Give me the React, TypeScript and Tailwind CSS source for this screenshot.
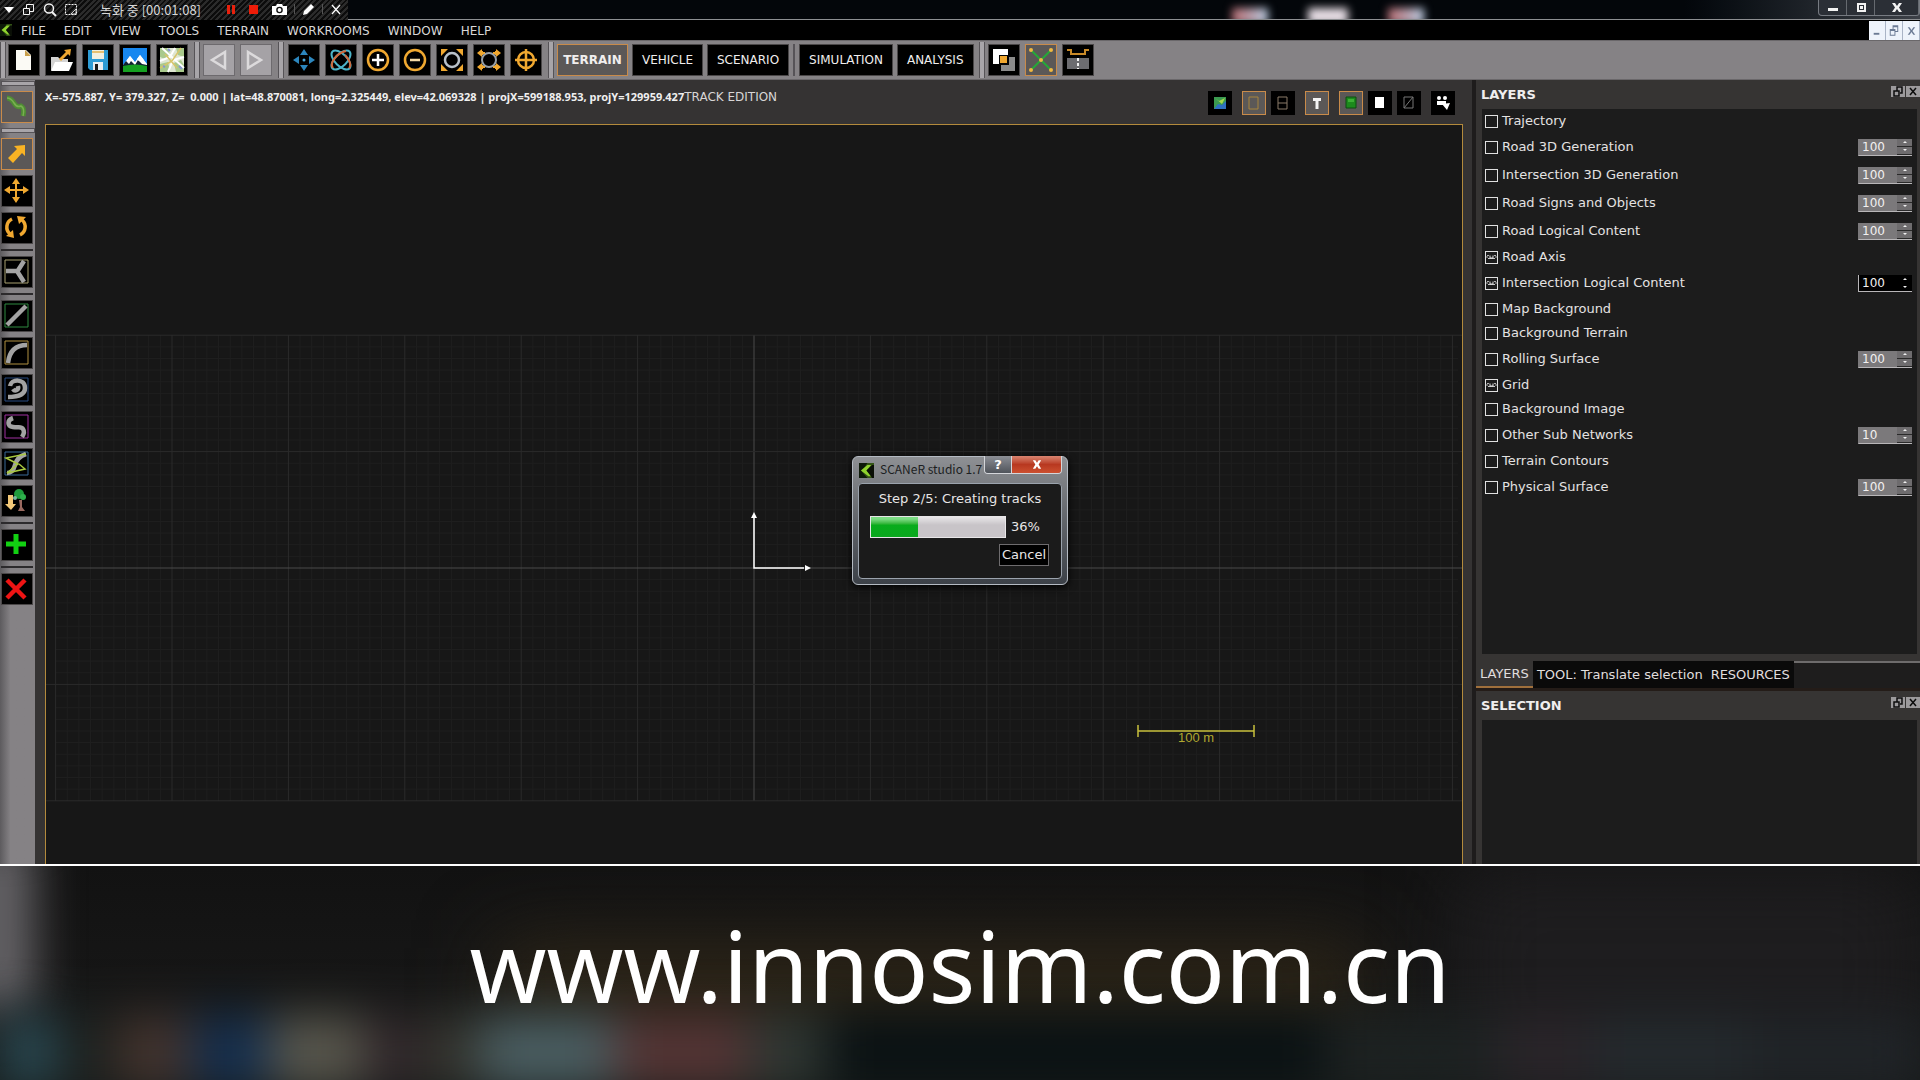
import React, { useState } from "react";

type Tone = "dark" | "active" | "disabled";

const TONES: Record<Tone, string> = {
  dark: "bg-black border-[#4a4748]",
  active: "bg-[#5b5857] border-[#c98b4a]",
  disabled: "bg-[#a5a2a6] border-[#6d6a6e]",
};

function Tool({ label, tone = "dark", children }: { label: string; tone?: Tone; children: React.ReactNode }) {
  return (
    <button
      type="button"
      aria-label={label}
      disabled={tone === "disabled"}
      className={`flex size-8 shrink-0 items-center justify-center border ${TONES[tone]}`}
    >
      <svg viewBox="0 0 32 32" className="size-8 shrink-0" fill="none">
        {children}
      </svg>
    </button>
  );
}

function SmallTool({ label, active, children }: { label: string; active?: boolean; children: React.ReactNode }) {
  return (
    <button
      type="button"
      aria-label={label}
      className={`flex size-6 shrink-0 items-center justify-center border ${active ? TONES.active : "border-black bg-black"}`}
    >
      <svg viewBox="0 0 24 24" className="size-6 shrink-0" fill="none">
        {children}
      </svg>
    </button>
  );
}

function Workroom({ label, active }: { label: string; active?: boolean }) {
  return (
    <button
      type="button"
      className={`h-8 shrink-0 border text-[12px] whitespace-nowrap text-[#f0eeee] ${
        active ? "w-[71px] border-[#c98b4a] bg-[#5b5857] font-bold" : "border-[#4a4748] bg-black px-[9px]"
      }`}
    >
      {label}
    </button>
  );
}

const Handle = () => <span className="h-9 w-[6px] shrink-0 border-x border-[#565357] bg-[#a8a5a9]" />;
const SideHandle = () => <span className="h-[5px] w-full shrink-0 border border-[#565357] bg-[#a8a5a9]" />;
const SideRule = () => <span className="h-[2px] w-8 shrink-0 bg-[#2c2a2c]" />;

const MENUS = ["FILE", "EDIT", "VIEW", "TOOLS", "TERRAIN", "WORKROOMS", "WINDOW", "HELP"];

function Logo({ className }: { className: string }) {
  return (
    <svg viewBox="0 0 16 16" className={className}>
      <rect width="16" height="16" fill="#0d1a08" />
      <path d="M0 0h16v16H9L3 9l6-9z" fill="#4c7a20" opacity=".6" />
      <path d="M2 8 9 2h4L8 8l6 6h-4z" fill="#8fd32e" />
      <path d="M8 8l6-6h2v14h-2z" fill="#0a0f06" />
    </svg>
  );
}

function RecorderBar() {
  return (
    <div className="flex h-5 w-[348px] shrink-0 items-center bg-[repeating-linear-gradient(135deg,#0c0c0c_0px,#0c0c0c_2px,#2b2b2b_2px,#2b2b2b_4px)] pl-1 text-white">
      <svg viewBox="0 0 80 20" className="h-5 w-20 shrink-0" fill="none" stroke="#f4f4f4">
        <path d="M0 7h10l-5 6z" fill="#fff" stroke="none" />
        <path d="M19.500 8.500h6v6h-6zM22.500 8.500v-4h7v7h-4" />
        <circle cx="45" cy="8.500" r="4.500" strokeWidth="1.500" />
        <path d="m48 12 4 4" strokeWidth="2" />
        <path d="M61.500 4.500h11v10h-11z" strokeDasharray="2 1" />
        <path d="m67 14 5-5v5z" strokeWidth=".8" />
      </svg>
      <span className="ml-4 w-[102px] shrink-0 font-['Noto_Sans_CJK_KR'] text-[13px] leading-5 whitespace-nowrap text-[#d8d8d8]">
        녹화 중 [00:01:08]
      </span>
      <svg viewBox="0 0 146 20" className="h-5 w-[146px] shrink-0" fill="none">
        <path d="M25 5h3v9h-3zM30 5h3v9h-3z" fill="#e8200c" />
        <rect x="47" y="5" width="9" height="9" fill="#ee1c08" />
        <path d="M70 6h4l1-2h5l1 2h4v9H70z" fill="#fff" />
        <circle cx="77.500" cy="10" r="2.600" stroke="#111" strokeWidth="1.400" />
        <path d="M92.500 4v10M120.500 4v10" stroke="#555" />
        <path d="m101 15 1-4 7-7 3 3-7 7z" fill="#fff" />
        <path d="m130 5 8 9m0-9-8 9" stroke="#fff" strokeWidth="1.300" />
      </svg>
    </div>
  );
}

function TitleBar() {
  return (
    <header className="flex h-5 overflow-hidden bg-[#03070c]">
      <RecorderBar />
      <div className="relative flex flex-1 justify-end overflow-hidden border-b border-[#8d8f92] bg-linear-to-r from-[#03060a] from-85% to-[#3d4148]">
        <div className="absolute top-2 right-[496px] flex gap-10 blur-[4px]">
          <span className="h-4 w-9 bg-linear-to-r from-[#b56a70] to-[#b8cfe6]" />
          <span className="h-4 w-10 bg-[#e8dfe6]" />
          <span className="h-4 w-9 bg-linear-to-r from-[#b56a70] to-[#b8cfe6]" />
        </div>
        <div className="relative flex h-4 rounded-b border border-t-0 border-[#777b82] bg-[#2b2f36]">
          {[
            { label: "Minimize", w: "w-7", d: "M7 8h10v3H7z" },
            { label: "Restore", w: "w-7", d: "M8 3h9v9H8zM10 5v5h5V5zM11 6h3v3h-3z" },
            { label: "Close", w: "w-11", d: "m7 3 3 0 2 3 2-3h3l-3 4.500 3 4.500h-3l-2-3-2 3H7l3-4.500z" },
          ].map((b) => (
            <button key={b.label} type="button" aria-label={b.label} className={`flex justify-center border-r border-[#666a70] ${b.w}`}>
              <svg viewBox="0 0 24 15" className="h-[15px] w-6" fill="#f2f2f2" fillRule="evenodd">
                <path d={b.d} />
              </svg>
            </button>
          ))}
        </div>
      </div>
    </header>
  );
}

function MenuBar() {
  return (
    <nav className="flex h-5 items-center bg-black">
      <Logo className="size-3 shrink-0" />
      <div className="flex flex-1 gap-[18px] pl-[9px]">
        {MENUS.map((m) => (
          <button key={m} type="button" className="pt-px text-[12px] leading-5 text-[#d9d7d7]">
            {m}
          </button>
        ))}
      </div>
      {[
        { label: "Minimize document", d: "M5 12h6v2H5z" },
        { label: "Restore document", d: "M4 8h6v7H4zM5 10v4h4v-4zM7 8V4h6v7h-3v-1h2V6H8v2z" },
        { label: "Close document", d: "M5 6h2l2 3 2-3h2l-3 4 3 4h-2l-2-3-2 3H5l3-4z" },
      ].map((b) => (
        <button key={b.label} type="button" aria-label={b.label} className="h-[19px] w-[17px] border-r border-[#aab4c6] bg-[#eef3fb]">
          <svg viewBox="0 0 17 19" className="h-[19px] w-4" fill="#6b7a94" fillRule="evenodd">
            <path d={b.d} />
          </svg>
        </button>
      ))}
    </nav>
  );
}

const ORANGE = "#f0a830";

function Toolbar() {
  return (
    <div className="flex h-10 items-center border-y border-[#6a676a] bg-[#858285]">
      <Handle />
      <div className="flex gap-[5px] pr-[6px] pl-[2px]">
        <Tool label="New">
          <path d="M8 6h10l5 5v15H8z" fill="#fbfaf5" />
          <path d="M17 6v6h6z" fill="#c9a04c" />
        </Tool>
        <Tool label="Open">
          <path d="M6 13h7l2 2h8v11H6z" fill="#d4d4d4" />
          <path d="M10 18h18l-4 9H6z" fill="#fff" />
          <path d="m15 16 8-8" stroke={ORANGE} strokeWidth="3" />
          <path d="m19 6 7-1-1 7z" fill={ORANGE} />
        </Tool>
        <Tool label="Save">
          <path d="M6 6h20v20H8l-2-2z" fill="#2d9bd4" />
          <path d="M10 6h12v9H10z" fill="#f4f0e0" />
          <path d="M10 8h12" stroke="#e8c070" strokeWidth="2" />
          <path d="M11 18h10v8H11z" fill="#e8eef2" />
          <path d="M13 20h3v6h-3z" fill="#1a1a1a" />
        </Tool>
        <Tool label="Terrain picture">
          <path d="M4 4h24v24H4z" fill="#1787f0" />
          <path d="m4 21 7-9 5 6 5-7 7 9v3H4z" fill="#fff" />
          <path d="m4 21 3-4 3 3 2-3 4 4 3-5 4 4 5 1v3H4z" fill="#123" />
          <path d="m11 12 4 5-3-1-2 2-2-2zM21 11l4 5-3-1-2 2-2-2z" fill="#fff" />
          <path d="M4 22q12-3 24 0v6H4z" fill="#14a020" />
        </Tool>
        <Tool label="Map">
          <path d="M4 4h24v24H4z" fill="#dfe6d2" />
          <path d="M4 4h7l3 6-5 5-5-2zM20 4h8v9l-6-2zM4 20l8-2 2 10H4zM18 19l7-3 3 5v7h-8z" fill="#a9c98c" />
          <path d="m4 17 10-4 5-9M12 28l5-12 11-3M6 4l22 20" stroke="#fff" strokeWidth="2" />
          <path d="m4 24 12-7 9-13M9 10l12 14" stroke="#d8c46a" strokeWidth="1.500" />
          <path d="m12 5 2 2M23 22l3 3M7 22l2 1" stroke="#8899d0" strokeWidth="2" />
        </Tool>
      </div>
      <Handle />
      <div className="flex gap-[5px] pr-[6px] pl-[3px]">
        <Tool label="Previous" tone="disabled">
          <path d="M22 8v16L9 16z" stroke="#dcdadc" strokeWidth="2.500" />
        </Tool>
        <Tool label="Next" tone="disabled">
          <path d="M8 8v16l13-8z" stroke="#dcdadc" strokeWidth="2.500" />
        </Tool>
      </div>
      <Handle />
      <div className="flex gap-[5px] pr-[6px] pl-[4px]">
        <Tool label="Pan">
          <path d="m16 5 4 6h-8zM16 27l4-6h-8zM5 16l6-4v8zM27 16l-6-4v8z" fill="#2c86be" />
          <circle cx="16" cy="16" r="1.500" fill="#4aa8dc" />
        </Tool>
        <Tool label="Orbit">
          <ellipse cx="16" cy="16" rx="12" ry="6" transform="rotate(45 16 16)" stroke="#4db4c8" strokeWidth="2" />
          <ellipse cx="16" cy="16" rx="12" ry="6" transform="rotate(-45 16 16)" stroke="#4db4c8" strokeWidth="2" />
          <path d="M8 24C4 19 12 9 21 7M24 24c3-3 0-9-4-13" stroke="#d06a3c" strokeWidth="2" />
        </Tool>
        <Tool label="Zoom in">
          <circle cx="16" cy="16" r="10" stroke={ORANGE} strokeWidth="2.500" />
          <path d="M10 16h12M16 10v12" stroke="#fff" strokeWidth="2.500" />
        </Tool>
        <Tool label="Zoom out">
          <circle cx="16" cy="16" r="10" stroke={ORANGE} strokeWidth="2.500" />
          <path d="M11 16h10" stroke="#f6dca8" strokeWidth="2.500" />
        </Tool>
        <Tool label="Zoom all">
          <circle cx="16" cy="16" r="7" stroke="#b8c0c8" strokeWidth="2.500" />
          <path d="M5 5h7l-7 7zM27 5h-7l7 7zM5 27h7l-7-7zM27 27h-7l7-7z" fill={ORANGE} />
        </Tool>
        <Tool label="Zoom selection">
          <circle cx="16" cy="16" r="7" stroke="#98a0a8" strokeWidth="2" />
          <path d="M9 9h3M20 9h3M9 23h3M20 23h3M9 7v4M23 7v4M9 21v4M23 21v4" stroke={ORANGE} strokeWidth="2" />
          <path d="m4 9 5-4v8zM28 9l-5-4v8zM4 23l5-4v8zM28 23l-5-4v8z" fill={ORANGE} />
        </Tool>
        <Tool label="Center">
          <circle cx="16" cy="16" r="8" stroke={ORANGE} strokeWidth="2.500" />
          <path d="M5 16h22M16 5v22" stroke={ORANGE} strokeWidth="2.500" />
        </Tool>
      </div>
      <Handle />
      <div className="flex items-center gap-[4px] pr-[5px] pl-[3px]">
        <Workroom label="TERRAIN" active />
        <Workroom label="VEHICLE" />
        <Workroom label="SCENARIO" />
        <span className="h-8 w-[2px] bg-[#565357]" />
        <Workroom label="SIMULATION" />
        <Workroom label="ANALYSIS" />
      </div>
      <Handle />
      <div className="flex gap-[5px] px-[3px]">
        <Tool label="Order">
          <path d="M13 13h14v14H13z" fill="#8b8b8b" />
          <path d="M5 5h15v15H5z" fill="#fff" />
          <path d="M11 11h10v10H11z" fill="#050505" />
          <path d="M12 12h7v7h-7z" fill={ORANGE} />
        </Tool>
        <Tool label="Network" tone="active">
          <path d="m6 6 20 20M26 6 6 26" stroke="#25a838" strokeWidth="2" />
          {[[6, 6], [26, 6], [16, 16], [6, 26], [26, 26]].map(([x, y]) => (
            <circle key={`${x}-${y}`} cx={x} cy={y} r="2" fill="#f0b840" />
          ))}
        </Tool>
        <Tool label="Profile">
          <path d="M5 6h4v4h14V6h4" stroke="#c98a28" strokeWidth="2" />
          <path d="M5 14h22v11H5z" fill="#6c6c70" />
          <path d="M16 14v11" stroke="#f0f0f0" strokeWidth="2" strokeDasharray="3 2" />
        </Tool>
      </div>
    </div>
  );
}

function RoadIcon({ frame, d, accent }: { frame: string; d: string; accent?: string }) {
  return (
    <>
      <path d="M4 4h23v23H4z" stroke={frame} strokeWidth="1" />
      <path d={d} stroke="#a3a3a3" strokeWidth="4.500" />
      {accent && <path d={accent} stroke="#a8c840" strokeWidth="1.500" />}
    </>
  );
}

function SideToolbar() {
  return (
    <aside className="flex w-[35px] shrink-0 flex-col gap-[5px] bg-linear-to-r from-[#5d5b5e] to-[#858285] to-30% pt-px pl-px">
      <SideHandle />
      <Tool label="Track" tone="active">
        <path d="M6 7q4 0 7 5t7 3q4 2 2 10" stroke="#4f8c34" strokeWidth="5" />
        <path d="M6 7q4 0 7 5t7 3q4 2 2 10" stroke="#79b050" strokeWidth="1.500" />
      </Tool>
      <SideHandle />
      <Tool label="Select" tone="active">
        <path d="M24 7v11l-3-3-9 10-5-5 9-9-3-3z" fill="#f9b324" />
      </Tool>
      <Tool label="Move">
        <path d="M5 15h21M15 5v21" stroke={ORANGE} strokeWidth="2" />
        <path d="m15 3 4 6h-8zM15 28l4-6h-8zM3 15l6-4v8zM28 15l-6-4v8z" fill={ORANGE} />
      </Tool>
      <Tool label="Rotate">
        <path d="M9 22a9 9 0 0 1 2-15M21 8a9 9 0 0 1-2 15" stroke={ORANGE} strokeWidth="3.500" />
        <path d="m12 18 1 8-8-2zM18 12l-2-8 9 1z" fill={ORANGE} />
      </Tool>
      <SideRule />
      <Tool label="Intersection">
        <RoadIcon frame="#a8a070" d="M5 15h12M16 16l7-11M16 15l7 11" />
      </Tool>
      <SideRule />
      <Tool label="Straight">
        <RoadIcon frame="#2f8a40" d="M6 25 25 6" />
      </Tool>
      <Tool label="Arc">
        <RoadIcon frame="#b09040" d="M7 26Q9 8 26 8" />
      </Tool>
      <Tool label="Spiral">
        <RoadIcon frame="#284a80" d="M9 12c1-7 15-8 15 2 0 7-7 9-17 9M12 15c2 3 6 1 5-3" />
      </Tool>
      <Tool label="S curve">
        <RoadIcon frame="#a030a0" d="M12 7c-6 2-6 8 0 9s8-1 10 2 1 5-1 8" />
      </Tool>
      <Tool label="Poly curve">
        <RoadIcon frame="#3a6a98" d="M6 25q6 0 8-8t11-11" accent="M25 6 5 10l12 6-11 9 18-4-6-5" />
      </Tool>
      <Tool label="Drop object">
        <path d="M7 10h5v9h3l-5 6-6-6h3z" fill="#f3c878" />
        <path d="M18 15h3v7l3 4h-7l2-4z" fill="#9a6a60" />
        <circle cx="18" cy="9" r="5" fill="#1f9c3c" />
        <circle cx="22" cy="12" r="3" fill="#2eb04c" />
        <circle cx="14" cy="13" r="2" fill="#7ab8a0" />
      </Tool>
      <SideRule />
      <Tool label="Add">
        <path d="M15 5v20M5 15h20" stroke="#12d012" strokeWidth="5" />
      </Tool>
      <SideRule />
      <Tool label="Delete">
        <path d="m6 7 18 18M24 7 6 25" stroke="#ee1414" strokeWidth="4.500" />
      </Tool>
    </aside>
  );
}

const UNIT = 11.64;
const COLUMNS = Array.from({ length: 121 }, (_, i) => i - 60);
const ROWS = Array.from({ length: 41 }, (_, i) => i - 20);
const shade = (i: number) => (i === 0 ? "#4a4a4a" : i % 10 === 0 ? "#2b2b2b" : "#1f1f1f");

function Viewport() {
  return (
    <div className="flex min-h-0 flex-1 border border-b-0 border-[#b38a3c] bg-[#171717]">
      <svg className="h-full min-h-0 w-full flex-1">
        <svg x="50%" y="443" overflow="visible">
          {COLUMNS.filter((i) => i % 10).map((i) => (
            <line key={i} x1={i * UNIT} x2={i * UNIT} y1={-233} y2={233} stroke={shade(i)} />
          ))}
          {ROWS.filter((i) => i % 10).map((i) => (
            <line key={i} y1={i * UNIT} y2={i * UNIT} x1={-698} x2={704} stroke={shade(i)} />
          ))}
          {COLUMNS.filter((i) => i % 10 === 0).map((i) => (
            <line key={i} x1={i * UNIT} x2={i * UNIT} y1={-233} y2={233} stroke={shade(i)} />
          ))}
          {ROWS.filter((i) => i % 10 === 0).map((i) => (
            <line key={i} y1={i * UNIT} y2={i * UNIT} x1={-708} x2={708} stroke={shade(i)} />
          ))}
          <path d="M0-50V0H50" stroke="#fff" strokeWidth="1.500" fill="none" />
          <path d="M0-56l3 6h-6zM57 0l-6 3v-6z" fill="#fff" />
          <path d="M384 163h116M384 157v12M500 157v12" stroke="#c8c03c" strokeWidth="1.500" fill="none" />
          <text x="442" y="174" textAnchor="middle" fill="#b0a830" className="font-['Liberation_Sans'] text-[13px]">
            100 m
          </text>
        </svg>
      </svg>
    </div>
  );
}

function Workspace() {
  return (
    <section className="flex min-w-0 flex-1 flex-col bg-[#353333] pr-[9px] pl-[10px]">
      <div className="flex h-11 shrink-0 items-start">
        <p className="flex flex-1 pt-[9px] leading-4 whitespace-pre text-[#efefef]">
          <span className="font-['Noto_Sans'] text-[11px] font-bold">
            {"X=-575.887, Y= 379.327, Z=  0.000 | lat=48.870081, long=2.325449, elev=42.069328 | projX=599188.953, projY=129959.427"}
          </span>
          <span className="text-[12px] text-[#d8d6d6]">TRACK EDITION</span>
        </p>
        <div className="flex gap-[5px] pt-[11px] pr-[8px]">
          <SmallTool label="Map view">
            <path d="M6 6h12v12H6z" fill="#3a9a50" />
            <path d="m6 18 4-5 4 1 4-4v8z" fill="#2f70c0" />
            <path d="m7 7 4 3 6-3-3 6z" fill="#a8d84a" />
          </SmallTool>
          <span />
          <SmallTool label="Single view" active>
            <path d="M7 6h9v12H7z" stroke="#a8843c" />
          </SmallTool>
          <SmallTool label="Split view">
            <path d="M7 6h9v12H7zM7 12h9" stroke="#8a7a68" />
          </SmallTool>
          <span />
          <SmallTool label="Text" active>
            <path d="M8 7h8v3h-2.500v8h-3v-8H8z" fill="#f4f4f4" />
          </SmallTool>
          <span />
          <SmallTool label="Textured" active>
            <path d="M7 6h10v11H7z" fill="#1c8a1c" stroke="#0c4c10" />
            <path d="M9 8h6v3H9z" fill="#3cb034" />
          </SmallTool>
          <SmallTool label="Solid">
            <path d="M7 6h9v11H7z" fill="#fff" />
          </SmallTool>
          <SmallTool label="Wire">
            <path d="M7 6h9v11H7zM16 6 7 17" stroke="#777" />
          </SmallTool>
          <span />
          <SmallTool label="Camera">
            <path d="M6 10h9v4H6zM11 13l8-1-3 7z" fill="#fff" />
            <circle cx="8" cy="7" r="2" fill="#fff" />
            <circle cx="14" cy="7" r="2" fill="#fff" />
          </SmallTool>
        </div>
      </div>
      <Viewport />
    </section>
  );
}

type Layer = { name: string; on?: boolean; value?: number; enabled?: boolean };

const LAYERS: Layer[] = [
  { name: "Trajectory" },
  { name: "Road 3D Generation", value: 100 },
  { name: "Intersection 3D Generation", value: 100 },
  { name: "Road Signs and Objects", value: 100 },
  { name: "Road Logical Content", value: 100 },
  { name: "Road Axis", on: true },
  { name: "Intersection Logical Content", on: true, value: 100, enabled: true },
  { name: "Map Background" },
  { name: "Background Terrain" },
  { name: "Rolling Surface", value: 100 },
  { name: "Grid", on: true },
  { name: "Background Image" },
  { name: "Other Sub Networks", value: 10 },
  { name: "Terrain Contours" },
  { name: "Physical Surface", value: 100 },
];

function SpinBox({ label, value, enabled }: { label: string; value: number; enabled?: boolean }) {
  const [n, setN] = useState(value);
  const step = enabled ? "bg-black" : "bg-[#6e6c6e] border-b border-[#2a2a2a]";
  return (
    <div className={`flex h-[17px] w-[54px] shrink-0 border-b border-l border-b-[#b8b6b8] ${enabled ? "border-l-[#b8b6b8] bg-black" : "border-l-[#7b797b] bg-[#7b797b]"}`}>
      <input
        type="text"
        inputMode="numeric"
        aria-label={`${label} opacity`}
        value={n}
        onChange={(e) => setN(Number(e.target.value) || 0)}
        className="w-[38px] min-w-0 bg-transparent pl-[3px] text-[12px] leading-4 text-[#f2f0f0] outline-none"
      />
      <div className="flex flex-1 flex-col">
        {[1, -1].map((dir) => (
          <button
            key={dir}
            type="button"
            aria-label={dir > 0 ? `Increase ${label}` : `Decrease ${label}`}
            onClick={() => setN(n + dir)}
            className={`flex h-2 items-center justify-center ${step}`}
          >
            <svg viewBox="0 0 6 4" className="h-1 w-[6px]" fill="#f0f0f0">
              <path d={dir > 0 ? "M1 3l2-2 2 2z" : "M1 1l2 2 2-2z"} />
            </svg>
          </button>
        ))}
      </div>
    </div>
  );
}

function LayerRow({ layer }: { layer: Layer }) {
  return (
    <li className={`flex items-center pr-[5px] pl-[3px] ${layer.value !== undefined ? "h-7" : "h-6"}`}>
      <label className="flex flex-1 items-center gap-[4px] text-[13px] leading-5 text-[#e4e2e2]">
        <span className="grid size-[13px] shrink-0 place-items-center">
          <input
            type="checkbox"
            defaultChecked={layer.on}
            className="peer col-start-1 row-start-1 size-[13px] appearance-none border border-[#e0e0e0]"
          />
          <svg viewBox="0 0 11 7" className="pointer-events-none invisible col-start-1 row-start-1 h-[7px] w-[11px] peer-checked:visible" fill="none">
            <path d="M1 1.500h2M8 1.500h2M1 2v2M10 2v2" stroke="#b0b0b0" />
            <path d="M2 4.500h7" stroke="#c8c8c8" />
            <path d="M4 1.500v2.500h3V1.500" stroke="#e0e0e0" />
          </svg>
        </span>
        {layer.name}
      </label>
      {layer.value !== undefined && <SpinBox label={layer.name} value={layer.value} enabled={layer.enabled} />}
    </li>
  );
}

function PanelHeader({ title }: { title: string }) {
  return (
    <div className="flex h-[29px] shrink-0 items-start justify-between bg-[#363433] pl-[5px]">
      <h2 className="pt-[5px] text-[13px] leading-5 font-bold text-[#f0eeee]">{title}</h2>
      <div className="flex gap-px pt-[6px]">
        {["Float", "Close"].map((a) => (
          <button key={a} type="button" aria-label={`${a} ${title}`} className="bg-[#9c9a9c]">
            <svg viewBox="0 0 14 11" className="h-[11px] w-[14px]" fill="none" stroke="#0c0c0c" strokeWidth="1.500">
              <path d={a === "Float" ? "M3 5h5v5H3zM6 5V1h5v6H9" : "m4 2 6 7m0-7-6 7"} />
            </svg>
          </button>
        ))}
      </div>
    </div>
  );
}

function RightDock() {
  return (
    <aside className="flex w-[448px] shrink-0 flex-col border-l-4 border-[#1e1c1c] bg-[#363433]">
      <PanelHeader title="LAYERS" />
      <ul className="mr-[3px] ml-[6px] h-[545px] shrink-0 bg-[#1c1c1c]">
        {LAYERS.map((l) => (
          <LayerRow key={l.name} layer={l} />
        ))}
      </ul>
      <div role="tablist" className="mt-[7px] flex h-[27px] shrink-0 bg-[#1e1d1d] text-[13px] leading-5 whitespace-nowrap text-[#e0dede]">
        <button type="button" role="tab" aria-selected="true" className="border-b-2 border-[#a0703c] bg-[#363433] px-[4px]">
          LAYERS
        </button>
        <button type="button" role="tab" aria-selected="false" className="bg-[#0a0a0a] px-[4px]">
          TOOL: Translate selection
        </button>
        <button type="button" role="tab" aria-selected="false" className="bg-[#0a0a0a] px-[4px]">
          RESOURCES
        </button>
        <span className="flex-1 border-t-2 border-[#6e6c6c]" />
      </div>
      <div className="h-[3px] shrink-0 bg-[#241c18]" />
      <PanelHeader title="SELECTION" />
      <div className="mr-[3px] ml-[6px] flex-1 bg-[#1c1c1c]" />
    </aside>
  );
}

function ProgressDialog() {
  return (
    <div
      role="dialog"
      aria-label="SCANeR studio 1.7"
      className="absolute top-[456px] left-1/2 flex w-[216px] -translate-x-1/2 flex-col rounded-md border border-[#b4bac2] bg-linear-to-b from-[#8e9094] via-[#6a6d72] via-40% to-[#3c4148] p-[5px] pt-0 shadow-[0_2px_8px_#000]"
    >
      <div className="flex h-[26px] items-start pl-px">
        <Logo className="mt-[6px] size-[15px] shrink-0" />
        <span className="mt-[2px] w-[110px] shrink-0 pl-[6px] font-['Noto_Sans_CJK_KR'] text-[12px] leading-5 whitespace-nowrap text-[#1c1e22]">
          SCANeR studio 1.7
        </span>
        <div className="-mt-px flex h-[18px] flex-1 overflow-hidden rounded-b border border-t-0 border-[#d4d6da]">
          <button type="button" aria-label="Help" className="w-[27px] shrink-0 border-r border-[#d4d6da] bg-linear-to-b from-[#8c8f95] to-[#50545b] text-[13px] leading-4 font-bold text-white">
            ?
          </button>
          <button type="button" aria-label="Close" className="flex flex-1 items-center justify-center bg-linear-to-b from-[#d88470] via-[#b83820] to-[#cc5030]">
            <svg viewBox="0 0 12 10" className="h-[9px] w-[10px]" fill="#fff">
              <path d="M1 0h3l2 3 2-3h3L8 5l3 5H8L6 7l-2 3H1l3-5z" />
            </svg>
          </button>
        </div>
      </div>
      <div className="flex h-[96px] flex-col rounded-sm border border-[#9ba3ad] bg-[#1b1b1b] px-[11px] pt-[5px] text-[13px] text-[#e8e6e6]">
        <p className="text-center leading-5 whitespace-nowrap">Step 2/5: Creating tracks</p>
        <div className="mt-[7px] flex items-center gap-[5px]">
          <div
            role="progressbar"
            aria-label="Creating tracks"
            aria-valuenow={36}
            className="flex h-[22px] w-[136px] shrink-0 border border-[#e8e6e8] bg-linear-to-b from-[#e8e6e8] to-[#c8c4c8] to-40%"
          >
            <span className="w-[35%] bg-linear-to-b from-[#7cdc84] from-10% via-[#08ac1c] via-40% to-[#0aa81e]" />
          </div>
          <span className="leading-5">36%</span>
        </div>
        <button type="button" className="mt-[6px] mr-px h-[22px] w-[50px] self-end border border-[#6e6c6e] bg-black leading-4">
          Cancel
        </button>
      </div>
    </div>
  );
}

function Banner() {
  return (
    <footer className="relative flex h-[216px] shrink-0 items-center justify-center overflow-hidden border-t-2 border-white bg-linear-to-b from-[#121212] via-[#161616] to-[#171b1a]">
      <div aria-hidden="true" className="absolute inset-0 flex items-end">
        <div className="absolute -top-8 -left-8 h-44 w-16 bg-[#6c6a6e] blur-xl" />
        <div className="absolute top-20 left-[26%] h-20 w-[45%] bg-[#302717] blur-2xl" />
        <div className="absolute top-0 right-0 h-full w-[24%] bg-[#1e1d1f] blur-2xl" />
        <div className="-mb-2 flex h-[72px] w-full shrink-0 blur-xl">
          <span className="w-[3%] bg-[#2a4a54]" />
          <span className="w-[3%] bg-[#1c201e]" />
          <span className="w-[4%] bg-[#44342e]" />
          <span className="w-[4%] bg-[#142f50]" />
          <span className="w-[5%] bg-[#5a584e]" />
          <span className="w-[3%] bg-[#30262a]" />
          <span className="w-[3%] bg-[#34342e]" />
          <span className="w-[7%] bg-[#4c6064]" />
          <span className="w-[7%] bg-[#563636]" />
          <span className="w-[4%] bg-[#303834]" />
          <span className="w-[26%] bg-[#0a1214]" />
          <span className="w-[9%] bg-[#1d2222]" />
          <span className="w-[5%] bg-[#2a252a]" />
          <span className="w-[8%] bg-[#242a2e]" />
          <span className="w-[9%] bg-[#202428]" />
        </div>
      </div>
      <p className="relative pb-[16px] font-['Noto_Sans',sans-serif] text-[98px] leading-[132px] whitespace-nowrap text-white">
        www.innosim.com.cn
      </p>
    </footer>
  );
}

export default function App() {
  return (
    <div className="relative flex h-screen flex-col overflow-hidden bg-[#353333] font-['DejaVu_Sans','Noto_Sans_CJK_KR',sans-serif]">
      <TitleBar />
      <MenuBar />
      <Toolbar />
      <main className="flex min-h-0 flex-1 overflow-hidden">
        <SideToolbar />
        <Workspace />
        <RightDock />
      </main>
      <Banner />
      <ProgressDialog />
    </div>
  );
}
